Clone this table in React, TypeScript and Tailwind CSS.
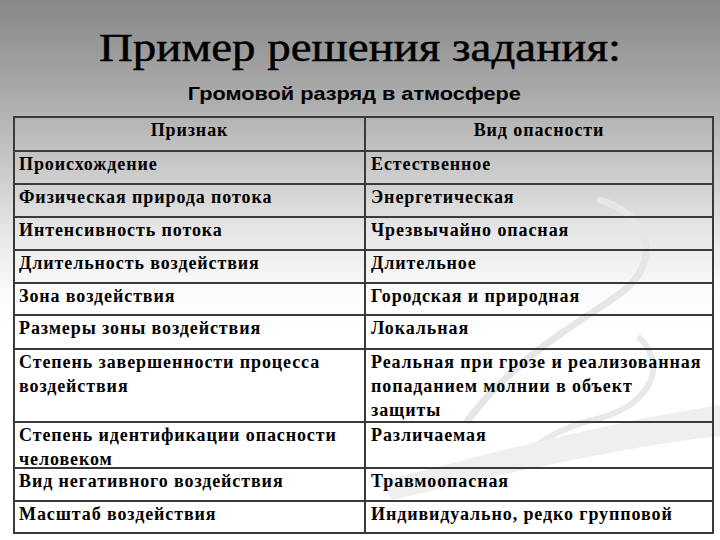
import React from "react";

const rows: { a: React.ReactNode; b: React.ReactNode; h: string }[] = [
  { a: "Происхождение", b: "Естественное", h: "h-[33px]" },
  { a: "Физическая природа потока", b: "Энергетическая", h: "h-[33px]" },
  { a: "Интенсивность потока", b: "Чрезвычайно опасная", h: "h-[33px]" },
  { a: "Длительность воздействия", b: "Длительное", h: "h-[33px]" },
  { a: "Зона воздействия", b: "Городская и природная", h: "h-[32px]" },
  { a: "Размеры зоны воздействия", b: "Локальная", h: "h-[34px]" },
  {
    a: "Степень завершенности процесса воздействия",
    b: (
      <>
        Реальная при грозе и реализованная попаданием молнии в объект
        <br />
        защиты
      </>
    ),
    h: "h-[73px]",
  },
  { a: "Степень идентификации опасности человеком", b: "Различаемая", h: "h-[46px]" },
  { a: "Вид негативного воздействия", b: "Травмоопасная", h: "h-[33px]" },
  { a: "Масштаб воздействия", b: "Индивидуально, редко групповой", h: "h-[32px]" },
];

export default function App() {
  return (
    <div className="relative w-[720px] h-[540px] overflow-hidden bg-[linear-gradient(180deg,#878787_0px,#a9a9a9_90px,#c6c6c6_160px,#e6e6e6_230px,#fbfbfb_290px,#ffffff_330px)]">
      <svg
        className="absolute inset-0 pointer-events-none"
        width="720"
        height="540"
        viewBox="0 0 720 540"
      >
        <path
          d="M600 200 C 650 215, 662 262, 622 292 C 582 322, 520 352, 468 420"
          stroke="#e6e6e6"
          strokeWidth="7"
          fill="none"
          strokeLinecap="round"
        />
        <path
          d="M640 338 C 672 372, 642 410, 592 420 C 562 428, 542 440, 528 452"
          stroke="#e9e9e9"
          strokeWidth="6"
          fill="none"
          strokeLinecap="round"
        />
        <path
          d="M720 405 C 620 420, 500 450, 380 482 L 392 500 C 520 470, 630 446, 720 436 Z"
          fill="#efefef"
        />
      </svg>

      <div className="relative flex flex-col items-center">
        <h1 className="mt-[22px] h-[50px] text-[41px] leading-[50px] whitespace-nowrap scale-x-[1.145] text-black font-['Liberation_Serif',serif] font-normal [-webkit-text-stroke:0.5px_black]">
          Пример решения задания:
        </h1>
        <div className="mt-[11px] mr-[11px] h-[22px] text-[17.5px] leading-[22px] whitespace-nowrap scale-x-[1.24] font-bold text-black font-['Liberation_Sans',Arial,sans-serif]">
          Громовой разряд в атмосфере
        </div>
      </div>

      <div className="relative ml-[13px] mt-[11px] w-[701px] border-2 border-[#3a3a3a] font-['Liberation_Serif',serif] font-bold text-[18px] leading-[24px] tracking-[0.9px] text-black">
        <div className="grid grid-cols-[351px_1fr] h-[32px]">
          <div className="border-r-2 border-[#3a3a3a] text-center">Признак</div>
          <div className="text-center">Вид опасности</div>
        </div>
        {rows.map((r, i) => (
          <div key={i} className={`grid grid-cols-[351px_1fr] border-t-2 border-[#3a3a3a] ${r.h}`}>
            <div className="border-r-2 border-[#3a3a3a] pl-[4px] pr-[4px]">{r.a}</div>
            <div className="pl-[5px] pr-[2px]">{r.b}</div>
          </div>
        ))}
      </div>
    </div>
  );
}
